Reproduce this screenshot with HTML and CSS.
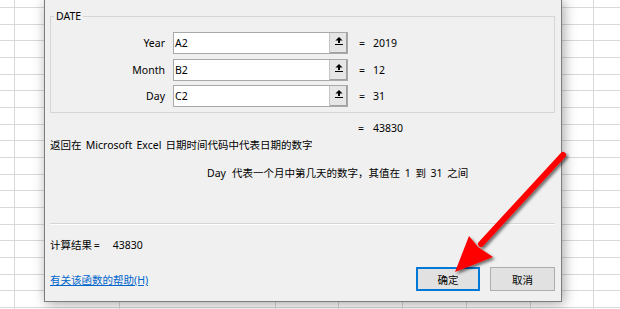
FILE: index.html
```html
<!DOCTYPE html>
<html lang="zh-CN">
<head>
<meta charset="utf-8">
<title>函数参数</title>
<link rel="stylesheet" href="styles.css">
</head>
<body>
<div class="sheet">
  <div class="col c0"></div>
  <div class="col c1"></div>
  <div class="col c2"></div>
  <div class="col c3"></div>
  <div class="col c4"></div>
  <div class="col c5"></div>
  <div class="col c6"></div>
  <div class="col c7"></div>
  <div class="col c8"></div>
</div>

<div class="dialog">
  <div class="group">
    <div class="legend">DATE</div>
    <div class="args">
      <div class="arg">
        <span class="name">Year</span>
        <div class="field"><span class="ref">A2</span><span class="pick"><svg class="pick-icon" viewBox="0 0 8 8"><polygon points="4,0 7.6,3.6 5,3.6 5,6 3,6 3,3.6 0.4,3.6"/><rect x="0" y="7" width="8" height="1"/></svg></span></div>
        <span class="eq">=</span><span class="val">2019</span>
      </div>
      <div class="arg">
        <span class="name">Month</span>
        <div class="field"><span class="ref">B2</span><span class="pick"><svg class="pick-icon" viewBox="0 0 8 8"><polygon points="4,0 7.6,3.6 5,3.6 5,6 3,6 3,3.6 0.4,3.6"/><rect x="0" y="7" width="8" height="1"/></svg></span></div>
        <span class="eq">=</span><span class="val">12</span>
      </div>
      <div class="arg">
        <span class="name">Day</span>
        <div class="field"><span class="ref">C2</span><span class="pick"><svg class="pick-icon" viewBox="0 0 8 8"><polygon points="4,0 7.6,3.6 5,3.6 5,6 3,6 3,3.6 0.4,3.6"/><rect x="0" y="7" width="8" height="1"/></svg></span></div>
        <span class="eq">=</span><span class="val">31</span>
      </div>
    </div>
  </div>

  <div class="result"><span class="eq">=</span><span class="val">43830</span></div>
  <p class="desc">返回在 Microsoft Excel 日期时间代码中代表日期的数字</p>
  <p class="param"><span class="pname">Day</span>代表一个月中第几天的数字，其值在 1 到 31 之间</p>
  <div class="sep"></div>
  <p class="calc">计算结果 =<span class="calc-val">43830</span></p>
  <div class="footer">
    <a class="help" href="#">有关该函数的帮助(H)</a>
    <div class="buttons">
      <button class="btn primary" type="button">确定</button>
      <button class="btn" type="button">取消</button>
    </div>
  </div>
</div>

<svg class="arrow" viewBox="0 0 620 309" width="620" height="309">
  <defs>
    <filter id="sh" x="-20%" y="-20%" width="140%" height="140%">
      <feDropShadow dx="2" dy="2" stdDeviation="1.6" flood-color="#000" flood-opacity="0.55"/>
    </filter>
  </defs>
  <g filter="url(#sh)">
    <line x1="563" y1="155" x2="481" y2="244" stroke="#ff0000" stroke-width="6" stroke-linecap="round"/>
    <polygon points="455,272 469,236 478,247 493,257" fill="#ff0000"/>
  </g>
</svg>
</body>
</html>
```

FILE: styles.css
```css
* { box-sizing: border-box; }

body {
  margin: 0;
  width: 620px;
  height: 309px;
  overflow: hidden;
  position: relative;
  background: #fff;
  font-family: "Noto Sans", "Noto Sans CJK SC", sans-serif;
  font-size: 10.5px;
  color: #000;
}

/* spreadsheet behind the dialog */
.sheet {
  display: flex;
  height: 309px;
  background-image: repeating-linear-gradient(to bottom, #d9d9d9 0, #d9d9d9 1px, transparent 1px, transparent 16.67px);
  background-position: 0 7px;
}
.col { flex: none; height: 100%; border-right: 1px solid #d9d9d9; }
.c0 { width: 15px; }
.c1 { width: 105px; }
.c2 { width: 156px; }
.c3 { width: 63px; }
.c4, .c5, .c6 { width: 64px; }
.c7 { width: 63px; }
.c8 { flex: 1; border-right: 0; }

/* dialog window */
.dialog {
  position: absolute;
  left: 44px;
  top: -1px;
  width: 518px;
  height: 303px;
  border: 1px solid #7c7c7c;
  background: #f0f0f0;
  box-shadow: 2px 2px 12px rgba(0, 0, 0, 0.35);
  padding: 16px 6px 10px 5px;
  display: flex;
  flex-direction: column;
  word-spacing: 1.5px;
}

.group {
  border: 1px solid #d5d5d5;
  padding-bottom: 5px;
}
.legend {
  width: fit-content;
  margin: -8px 0 0 3px;
  padding: 0 2px;
  line-height: 14px;
  background: #f0f0f0;
}
.args {
  margin-top: 9px;
  display: flex;
  flex-direction: column;
  gap: 4.5px;
}
.arg {
  display: flex;
  align-items: center;
  height: 22px;
}
.name {
  width: 114px;
  margin-right: 8px;
  text-align: right;
}
.field {
  display: flex;
  width: 175px;
  height: 22px;
  border: 1px solid #a9a9a9;
  background: #fff;
}
.ref {
  flex: 1;
  padding-left: 1px;
  line-height: 20px;
}
.pick {
  width: 18px;
  display: flex;
  justify-content: center;
  align-items: flex-start;
  padding-top: 4px;
  background: #e6e6e6;
  border-left: 1px solid #c4c4c4;
  box-shadow: inset -1px -1px 0 #a0a0a0;
}
.pick-icon { width: 8px; height: 8px; fill: #000; }
.eq {
  width: 14px;
  margin-left: 11px;
}

.result {
  margin-top: 7px;
  padding-left: 308px;
  line-height: 16px;
  display: flex;
}
.result .eq { margin-left: 0; width: 15px; }

.desc, .param, .calc {
  margin: 0;
  line-height: 16px;
}
.desc { margin-top: 1px; }
.param { margin-top: 12px; padding-left: 157px; word-spacing: 2px; }
.pname { margin-right: 6px; }

.sep {
  margin-top: 42px;
  height: 2px;
  border-top: 1px solid #d5d5d5;
  border-bottom: 1px solid #fdfdfd;
}
.calc { margin-top: 12px; word-spacing: -1px; }
.calc-val { margin-left: 13px; }

.footer {
  margin-top: 14px;
  display: flex;
  justify-content: space-between;
  align-items: center;
}
.help {
  color: #0066cc;
  text-decoration: underline;
  line-height: 16px;
  margin-top: 2px;
  word-spacing: normal;
}
.buttons { display: flex; gap: 10px; }
.btn {
  width: 65px;
  height: 24px;
  padding: 0;
  font: inherit;
  color: #000;
  background: #e1e1e1;
  border: 1px solid #adadad;
}
.btn.primary {
  width: 64px;
  border: 2px solid #0078d7;
}

.arrow {
  position: absolute;
  left: 0;
  top: 0;
  pointer-events: none;
}
```
